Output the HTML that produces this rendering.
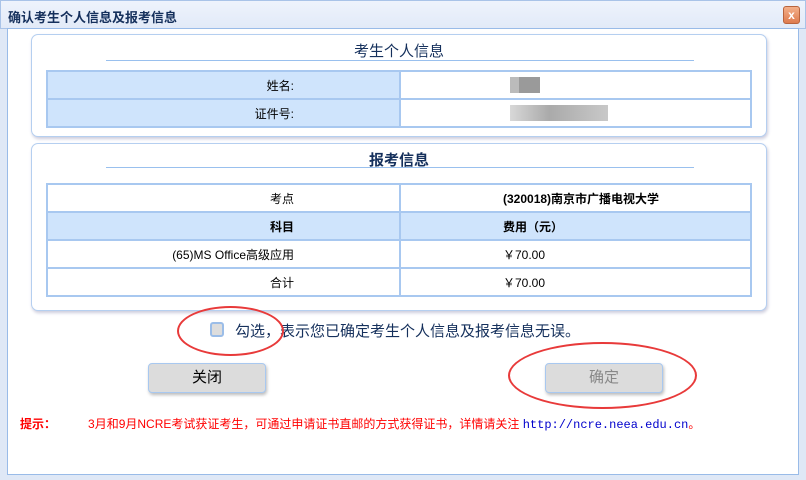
<!DOCTYPE html>
<html><head><meta charset="utf-8"><style>
*{margin:0;padding:0;box-sizing:border-box}
body{width:806px;height:480px;background:#dfe8f6;font-family:"Liberation Sans","Noto Sans CJK SC",sans-serif;position:relative;overflow:hidden;font-size:12px;color:#000}
.title{position:absolute;left:0;top:0;width:806px;height:29px;background:linear-gradient(#eef3fc,#e2eaf8);border:1px solid #a9c3e8}
.title span{position:absolute;left:7px;top:6px;font-size:13px;font-weight:bold;color:#15305c}
.x{position:absolute;left:783px;top:6px;width:17px;height:18px;background:linear-gradient(#f4b08a,#de7b4f);border:1px solid #b8643e;border-radius:3px;color:#fff;font-size:12px;font-weight:bold;text-align:center;line-height:16px}
.panel{position:absolute;left:7px;top:28px;width:792px;height:447px;background:#fff;border:1px solid #99bbe8}
.box{position:absolute;left:31px;width:736px;border:1px solid #b5cff0;border-radius:7px;background:#fff;box-shadow:1px 2px 3px #ccd}
.h{position:absolute;left:0;width:100%;text-align:center;font-size:15px;color:#15305c}
.ul{position:absolute;left:74px;width:588px;height:1px;background:#99c0ee}
table{position:absolute;left:14px;width:706px;border-collapse:collapse;border:1px solid #a8c8f0}
td{border:2px solid #a8c8f0;height:28px;font-size:12px;padding:0}
td.l{width:353px;text-align:right;padding-right:105px}
td.r{padding-left:102px}
.bl td.l{background:#cfe4fc}
.hd td{background:#cfe4fc;font-weight:bold}
.blur{display:inline-block;height:16px;background:#b0b0b0;vertical-align:middle}
.btn{position:absolute;top:363px;width:118px;height:30px;border:1px solid #a8c8f0;border-radius:4px;background:#dcdcdc;text-align:center;line-height:28px;font-size:15px;box-shadow:1px 2px 3px #bbb}
.ell{position:absolute;border:2.5px solid #e83a3a;border-radius:50%}
</style></head><body>
<div class="title"><span>确认考生个人信息及报考信息</span></div>
<div class="x">x</div>
<div class="panel"></div>
<div class="box" style="top:34px;height:103px">
 <div class="h" style="top:5px">考生个人信息</div>
 <div class="ul" style="top:25px"></div>
 <table style="top:35px" class="bl">
  <tr class="bl"><td class="l">姓名:</td><td class="r" style="padding-left:109px"><span class="blur" style="width:30px;background:linear-gradient(90deg,#bbb 30%,#9a9a9a 30%)"></span></td></tr>
  <tr class="bl"><td class="l">证件号:</td><td class="r" style="padding-left:109px"><span class="blur" style="width:98px;background:linear-gradient(90deg,#d8d8d8,#aaa 40%,#c8c8c8)"></span></td></tr>
 </table>
</div>
<div class="box" style="top:143px;height:168px">
 <div class="h" style="top:5px;font-weight:bold">报考信息</div>
 <div class="ul" style="top:23px"></div>
 <table style="top:39px">
  <tr><td class="l">考点</td><td class="r" style="font-weight:bold">(320018)南京市广播电视大学</td></tr>
  <tr class="hd"><td class="l">科目</td><td class="r">费用（元）</td></tr>
  <tr><td class="l">(65)MS Office高级应用</td><td class="r">￥70.00</td></tr>
  <tr><td class="l">合计</td><td class="r">￥70.00</td></tr>
 </table>
</div>
<div style="position:absolute;left:210px;top:322px;width:14px;height:15px;border:2px solid #9bbde8;border-radius:3px;background:#ddd"></div>
<div style="position:absolute;left:235px;top:320px;font-size:15px;color:#15305c">勾选，表示您已确定考生个人信息及报考信息无误。</div>
<div class="ell" style="left:177px;top:306px;width:107px;height:50px"></div>
<div class="btn" style="left:148px">关闭</div>
<div class="btn" style="left:545px;color:#888">确定</div>
<div class="ell" style="left:508px;top:342px;width:189px;height:67px"></div>
<div style="position:absolute;left:20px;top:415px;font-size:12px;color:#f00;white-space:nowrap"><b>提示：</b><span style="margin-left:32px">3月和9月NCRE考试获证考生，可通过申请证书直邮的方式获得证书，详情请关注</span> <span style="color:#00c;font-family:'Liberation Mono',monospace">http://ncre.neea.edu.cn</span>。</div>
</body></html>
